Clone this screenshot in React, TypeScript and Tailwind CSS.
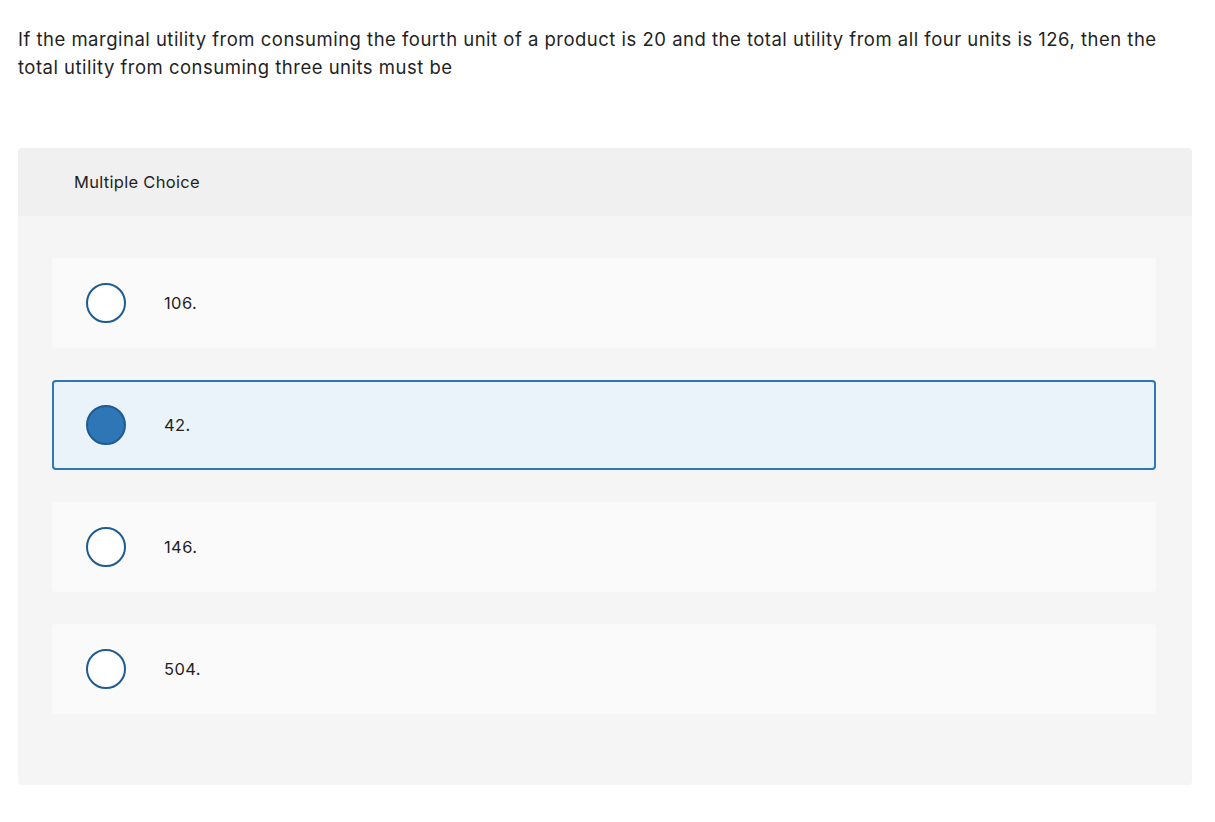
import React from "react";

const options = [
  { label: "106.", selected: false },
  { label: "42.", selected: true },
  { label: "146.", selected: false },
  { label: "504.", selected: false },
];

export default function App() {
  return (
    <div
      className="min-h-[822px] w-[1215px] bg-white text-[#1a1a1a]"
      style={{ fontFamily: '"Inter", "Open Sans", sans-serif' }}
    >
      <div className="pl-[18px] pr-[30px] pt-[25px] text-[18.5px] leading-[28px] tracking-[0.49px] text-[#1f1f1f]">
        If the marginal utility from consuming the fourth unit of a product is 20 and the total utility from all four units is 126, then the total utility from consuming three units must be
      </div>
      <div className="ml-[18px] mt-[67px] w-[1174px] overflow-hidden rounded-[4px] bg-[#f5f5f5]">
        <div className="flex h-[68px] items-center bg-[#f0f0f0] pl-[56px] text-[16.5px] tracking-[0.3px] text-[#1f1f1f]">
          Multiple Choice
        </div>
        <div className="flex flex-col gap-[32px] pb-[71px] pl-[34px] pr-[36px] pt-[42px]">
          {options.map((o) => (
            <div
              key={o.label}
              className={
                o.selected
                  ? "flex h-[90px] items-center rounded-[4px] border-2 border-[#2f76b6] bg-[#ebf3fa] pl-[32px]"
                  : "flex h-[90px] items-center rounded-[4px] bg-[#fafafa] pl-[34px]"
              }
            >
              <div
                className={
                  o.selected
                    ? "h-[40px] w-[40px] rounded-full border-2 border-[#1d5b92] bg-[#2e76b6]"
                    : "h-[40px] w-[40px] rounded-full border-2 border-[#1d5b92] bg-white"
                }
              />
              <div className="ml-[38px] text-[16.5px] tracking-[0.4px] text-[#1f1f1f]">{o.label}</div>
            </div>
          ))}
        </div>
      </div>
    </div>
  );
}
